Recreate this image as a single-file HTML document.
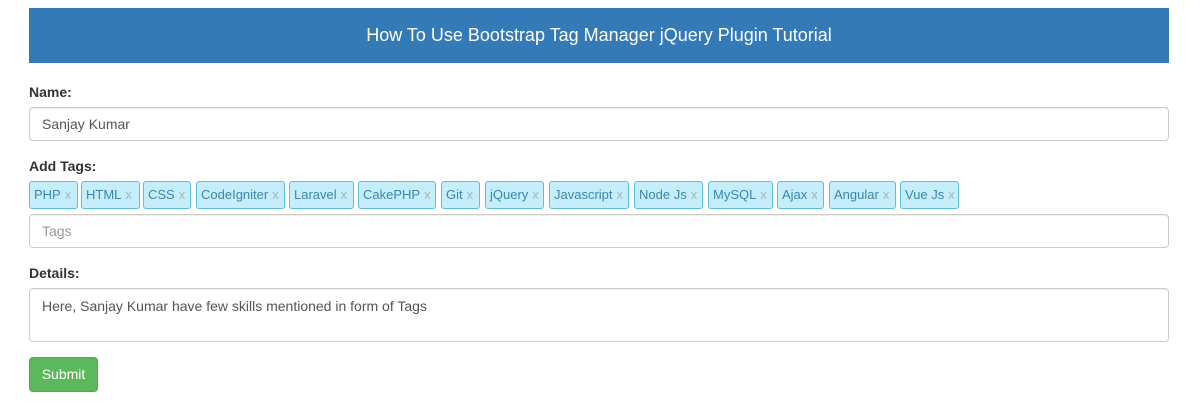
<!DOCTYPE html>
<html><head><style>
body{margin:0;width:1203px;height:417px;background:#fff;font-family:"Liberation Sans",sans-serif;font-size:14px;color:#333;position:relative;overflow:hidden}
.hdr{position:absolute;left:29px;top:8px;width:1140px;height:55px;background:#337ab7;color:#fff;font-size:18px;text-align:center;line-height:55px}
.lbl{position:absolute;left:29px;font-weight:bold;font-size:14px}
.inp{position:absolute;left:29px;width:1138px;border:1px solid #ccc;border-radius:4px;box-shadow:inset 0 1px 1px rgba(0,0,0,.075);box-sizing:content-box}
.inp span{position:absolute;left:12px}
.tag{position:absolute;top:181px;height:26px;line-height:26px;background:#c5eefa;border:1px solid #5bc0de;border-radius:3px;color:#3a87ad;font-size:13px;padding-left:4px;box-sizing:content-box;white-space:nowrap;overflow:hidden}
.tag i{font-style:normal;color:#a2b4bd;margin-left:4px}
.btn{position:absolute;left:29px;top:357px;width:67px;height:33px;background:#5cb85c;border:1px solid #4cae4c;border-radius:4px;color:#fff;text-align:center;line-height:33px;font-size:14px}
</style></head><body>
<div class="hdr">How To Use Bootstrap Tag Manager jQuery Plugin Tutorial</div>
<div class="lbl" style="top:84px">Name:</div>
<div class="inp" style="top:107px;height:32px"><span style="top:8px;color:#555">Sanjay Kumar</span></div>
<div class="lbl" style="top:158px">Add Tags:</div>
<div class="tag" style="left:29px;width:43px">PHP<i>x</i></div>
<div class="tag" style="left:81px;width:53px">HTML<i>x</i></div>
<div class="tag" style="left:143px;width:42px">CSS<i>x</i></div>
<div class="tag" style="left:196px;width:83px">CodeIgniter<i>x</i></div>
<div class="tag" style="left:289px;width:59px">Laravel<i>x</i></div>
<div class="tag" style="left:358px;width:72px">CakePHP<i>x</i></div>
<div class="tag" style="left:441px;width:33px">Git<i>x</i></div>
<div class="tag" style="left:485px;width:53px">jQuery<i>x</i></div>
<div class="tag" style="left:549px;width:74px">Javascript<i>x</i></div>
<div class="tag" style="left:634px;width:63px">Node Js<i>x</i></div>
<div class="tag" style="left:708px;width:59px">MySQL<i>x</i></div>
<div class="tag" style="left:777px;width:41px">Ajax<i>x</i></div>
<div class="tag" style="left:829px;width:61px">Angular<i>x</i></div>
<div class="tag" style="left:900px;width:53px">Vue Js<i>x</i></div>
<div class="inp" style="top:214px;height:32px"><span style="top:8px;color:#999">Tags</span></div>
<div class="lbl" style="top:265px">Details:</div>
<div class="inp" style="top:288px;height:52px"><span style="top:9px;color:#555">Here, Sanjay Kumar have few skills mentioned in form of Tags</span></div>
<div class="btn">Submit</div>
</body></html>
